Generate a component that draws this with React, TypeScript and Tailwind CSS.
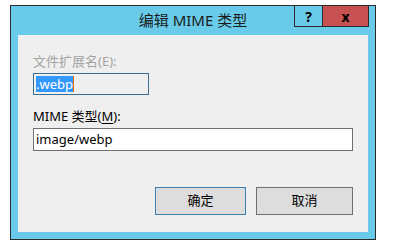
const font = "font-['Noto_Sans','Noto_Sans_CJK_SC',sans-serif]";

export default function App() {
  return (
    <div className={`h-[246px] w-[409px] bg-white pl-[10px] pt-[5px] ${font}`}>
      <div className="flex h-[235px] w-[366px] flex-col border border-[#2b2b2b] bg-[#69cbe9]">
        {/* title bar */}
        <div className="relative flex h-[29px] items-center justify-center">
          <span className="text-[15px] leading-none text-[#1a1a1a]">编辑 MIME 类型</span>
          <div className="absolute right-[6px] top-[-1px] flex h-[22px]">
            <div className="flex w-[29px] items-center justify-center border border-[#2b2b2b] bg-[#69cbe9] text-[14px] font-bold text-black">
              ?
            </div>
            <div className="ml-[-1px] flex w-[47px] items-center justify-center border border-[#2b2b2b] bg-[#c75050] text-[14px] font-bold text-black">
              x
            </div>
          </div>
        </div>

        {/* client area */}
        <div className="mx-[7px] flex h-[197px] flex-col bg-[#efefef] px-[15px] pt-[18px]">
          <div className="text-[13px] leading-[16px] text-[#a3a3a3]">文件扩展名(E):</div>
          <div className="mt-[4px] flex h-[22px] w-[116px] items-center border border-[#3a6d93] bg-[#efefef] px-[2px]">
            <span className="bg-[#3399ff] text-[13px] leading-[16px] text-white">.webp</span>
            <span className="h-[16px] w-[1px] bg-[#e07000]" />
          </div>

          <div className="mt-[13px] text-[13px] leading-[16px] text-black">
            MIME 类型(<span className="underline underline-offset-2">M</span>):
          </div>
          <div className="mt-[4px] flex h-[23px] w-[320px] items-center border border-[#707070] bg-white px-[2px] text-[13px] text-black">
            image/webp
          </div>

          <div className="mt-[36px] flex justify-end gap-[10px]">
            <button className="h-[28px] w-[91px] border border-[#3c7fb1] bg-[#dddddd] text-[13px] text-black">
              确定
            </button>
            <button className="h-[28px] w-[97px] border border-[#707070] bg-[#dddddd] text-[13px] text-black">
              取消
            </button>
          </div>
        </div>
      </div>
    </div>
  );
}
